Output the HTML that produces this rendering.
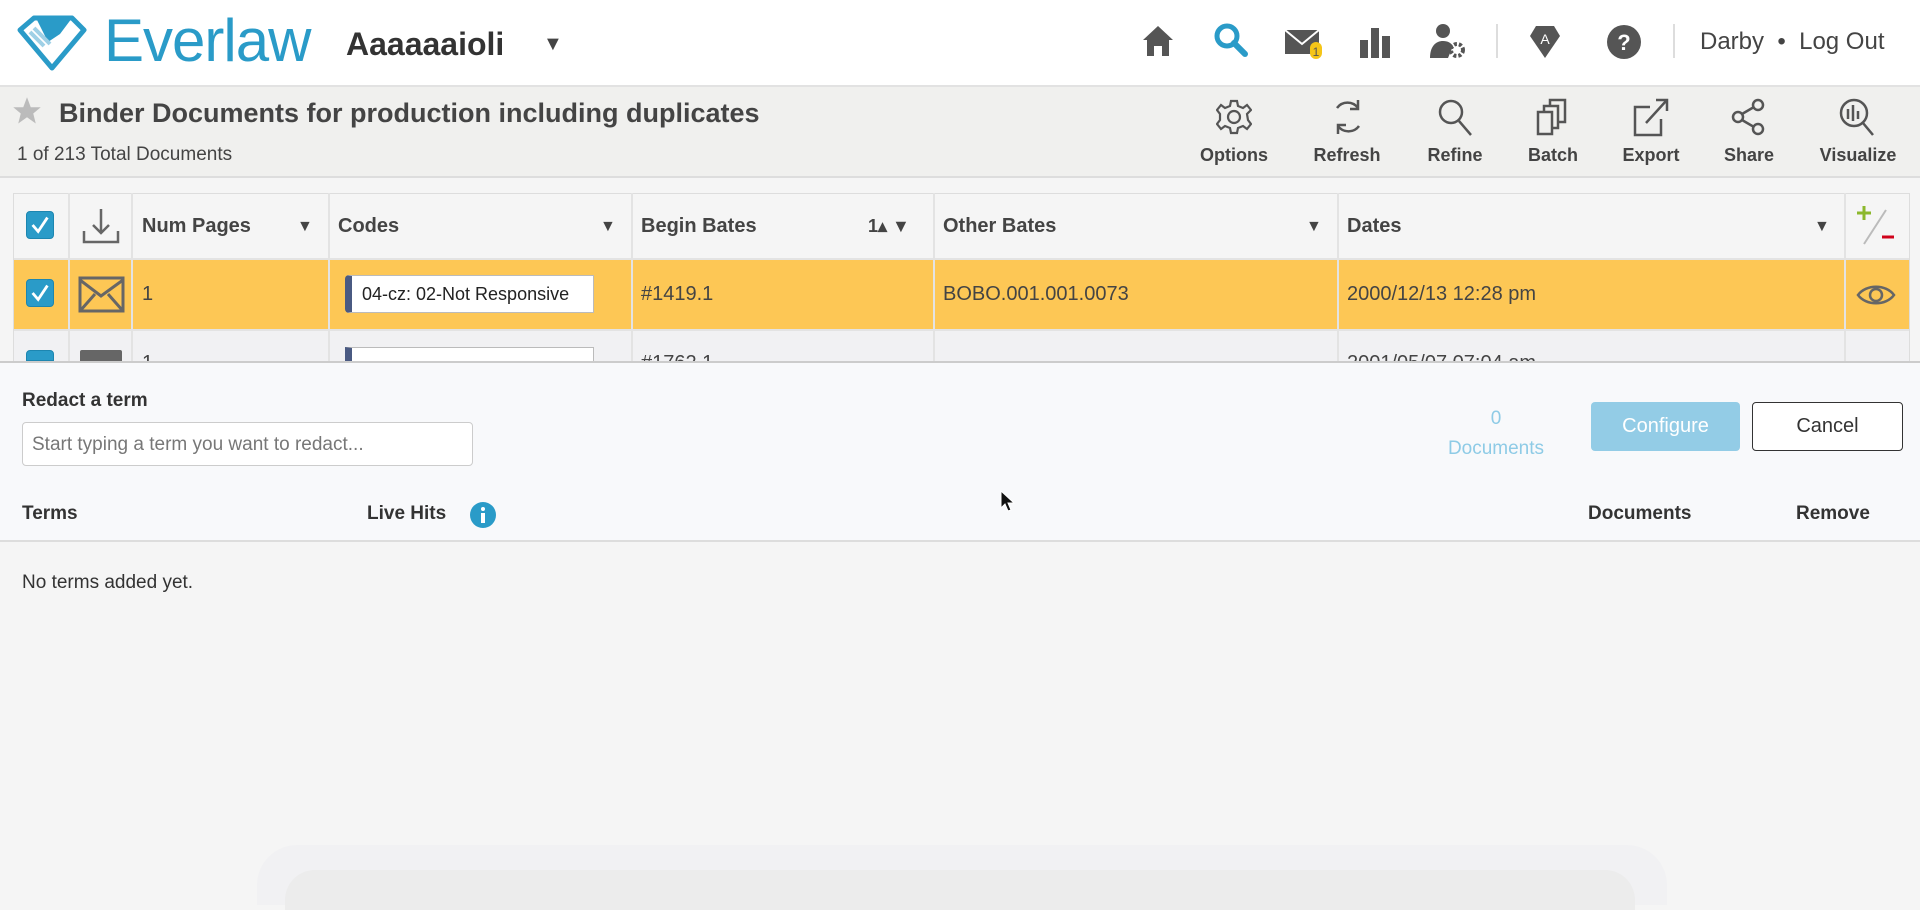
<!DOCTYPE html>
<html><head><meta charset="utf-8"><style>
*{box-sizing:border-box;margin:0;padding:0}
body{width:1920px;height:894px;overflow:hidden;position:relative;background:#f5f5f5;font-family:"Liberation Sans",sans-serif;color:#444}
.a{position:absolute;white-space:nowrap}
.hdr{left:0;top:0;width:1920px;height:87px;background:#fff;border-bottom:2px solid #e2e2e2}
.tb{left:0;top:87px;width:1920px;height:91px;background:#f0f0ee;border-bottom:2px solid #ddd}
.ti{text-align:center;font-size:18px;color:#444;font-weight:bold}
.tbl{left:13px;top:193px;width:1897px;height:168px;border:1px solid #ddd;background:#f5f5f5}
.cb{width:28px;height:28px;border-radius:4px;background:#2a9bc8;border:1px solid #1d86b0}
.th{font-size:20px;font-weight:bold;color:#444;top:215px}
.td{font-size:20px;color:#444;top:283px}
.td2{font-size:20px;color:#444;top:352px}
.vl{top:193px;width:2px;height:168px;background:#e3e3e3}
</style></head><body>
<div class="a hdr"></div>
<svg class="a" style="left:16px;top:14px" width="72" height="58" viewBox="0 0 72 58"><path d="M4 16 L18 4 L56 4 L68 16 L36 54 Z" fill="none" stroke="#2a9bc8" stroke-width="5" stroke-linejoin="round"/><path d="M20 4 L56 4 L44 20 L32 28 Z" fill="#2a9bc8"/><path d="M14 18 L28 32 M18 14 L34 30" stroke="#9fd0e6" stroke-width="4"/></svg>
<div class="a" style="left:104px;top:6px;font-size:60px;color:#2a9bc8;font-weight:300;letter-spacing:-1px">Everlaw</div>
<div class="a" style="left:346px;top:26px;font-size:32px;font-weight:bold;color:#333">Aaaaaaioli</div>
<div class="a" style="left:543px;top:33px;font-size:20px;color:#444">▼</div>
<svg class="a" style="left:1141px;top:24px" width="34" height="34" viewBox="0 0 34 34"><path d="M17 2 L32 16 L28 16 L28 32 L21 32 L21 22 L13 22 L13 32 L6 32 L6 16 L2 16 Z" fill="#555"/></svg>
<svg class="a" style="left:1213px;top:22px" width="36" height="36" viewBox="0 0 36 36"><circle cx="14" cy="14" r="10" fill="none" stroke="#2a9bc8" stroke-width="5"/><path d="M21 21 L32 32" stroke="#2a9bc8" stroke-width="6" stroke-linecap="round"/></svg>
<svg class="a" style="left:1284px;top:26px" width="40" height="34" viewBox="0 0 40 34"><rect x="1" y="4" width="34" height="24" fill="#555"/><path d="M1 4 L18 18 L35 4" fill="none" stroke="#fff" stroke-width="2"/><rect x="26" y="16" width="12" height="17" rx="6" fill="#f5c518"/><text x="32" y="30" font-size="12" text-anchor="middle" fill="#555" font-family="Liberation Sans">1</text></svg>
<svg class="a" style="left:1358px;top:24px" width="34" height="34" viewBox="0 0 34 34"><rect x="2" y="16" width="8" height="18" fill="#555"/><rect x="13" y="4" width="8" height="30" fill="#555"/><rect x="24" y="12" width="8" height="22" fill="#555"/></svg>
<svg class="a" style="left:1428px;top:22px" width="40" height="38" viewBox="0 0 40 38"><circle cx="15" cy="9" r="7" fill="#555"/><path d="M2 36 C2 24 8 19 15 19 C20 19 23 21 25 24 L20 36 Z" fill="#555"/><circle cx="29" cy="28" r="6" fill="none" stroke="#555" stroke-width="4" stroke-dasharray="3 2"/></svg>
<div class="a" style="left:1496px;top:24px;width:2px;height:34px;background:#ddd"></div>
<svg class="a" style="left:1528px;top:24px" width="34" height="36" viewBox="0 0 34 36"><path d="M8 2 L26 2 L32 12 L17 34 L2 12 Z" fill="#555"/><text x="17" y="20" font-size="14" text-anchor="middle" fill="#fff" font-family="Liberation Sans">A</text></svg>
<svg class="a" style="left:1606px;top:24px" width="36" height="36" viewBox="0 0 36 36"><circle cx="18" cy="18" r="17" fill="#555"/><text x="18" y="26" font-size="22" font-weight="bold" text-anchor="middle" fill="#fff" font-family="Liberation Sans">?</text></svg>
<div class="a" style="left:1673px;top:24px;width:2px;height:34px;background:#ddd"></div>
<div class="a" style="left:1700px;top:28px;font-size:24px;color:#444">Darby &nbsp;•&nbsp; Log Out</div>

<div class="a tb"></div>
<svg class="a" style="left:12px;top:96px" width="30" height="30" viewBox="0 0 24 24"><path d="M12 1 L15 9 L23 9 L17 14 L19 22 L12 17 L5 22 L7 14 L1 9 L9 9 Z" fill="#bbb"/></svg>
<div class="a" style="left:59px;top:98px;font-size:27px;font-weight:bold;color:#444">Binder Documents for production including duplicates</div>
<div class="a" style="left:17px;top:144px;font-size:19px;color:#444">1 of 213 Total Documents</div>
<svg class="a" style="left:1216px;top:98px" width="36" height="38" viewBox="0 0 36 38" fill="none" stroke="#555" stroke-width="2.2"><circle cx="18" cy="19" r="6"/><path d="M15 3 L21 3 L22 8 L27 10 L31 7 L35 12 L31 16 L32 22 L35 26 L31 31 L27 28 L22 30 L21 35 L15 35 L14 30 L9 28 L5 31 L1 26 L4 22 L4 16 L1 12 L5 7 L9 10 L14 8 Z"/></svg>
<svg class="a" style="left:1330px;top:98px" width="36" height="38" viewBox="0 0 36 38" fill="none" stroke="#555" stroke-width="2.5"><path d="M28 10 A13 13 0 0 0 7 10 M8 28 A13 13 0 0 0 29 28"/><path d="M28 2 L28 11 L20 11 M8 36 L8 27 L16 27"/></svg>
<svg class="a" style="left:1436px;top:97px" width="38" height="40" viewBox="0 0 38 40" fill="none" stroke="#555" stroke-width="2.5"><circle cx="15" cy="15" r="11"/><path d="M23 24 L35 38"/></svg>
<svg class="a" style="left:1535px;top:98px" width="36" height="38" viewBox="0 0 36 38" fill="none" stroke="#555" stroke-width="2.5"><rect x="3" y="14" width="14" height="22"/><path d="M9 14 V8 H23 V30 H17 M15 8 V2 H30 V24 H23"/></svg>
<svg class="a" style="left:1632px;top:97px" width="38" height="40" viewBox="0 0 38 40" fill="none" stroke="#555" stroke-width="2.5"><path d="M18 10 H3 V38 H29 V22"/><path d="M14 26 L34 4 M24 3 H35 V14"/></svg>
<svg class="a" style="left:1730px;top:98px" width="38" height="38" viewBox="0 0 38 38" fill="none" stroke="#555" stroke-width="2.5"><circle cx="28" cy="7" r="5"/><circle cx="8" cy="19" r="5"/><circle cx="28" cy="31" r="5"/><path d="M12 16 L24 9 M12 22 L24 29"/></svg>
<svg class="a" style="left:1838px;top:97px" width="38" height="40" viewBox="0 0 38 40" fill="none" stroke="#555" stroke-width="2.5"><circle cx="16" cy="16" r="13"/><path d="M25 26 L35 38 M10 12 V22 M15 8 V24 M20 14 V22"/></svg>
<div class="a ti" style="left:1184px;top:145px;width:100px">Options</div>
<div class="a ti" style="left:1297px;top:145px;width:100px">Refresh</div>
<div class="a ti" style="left:1405px;top:145px;width:100px">Refine</div>
<div class="a ti" style="left:1503px;top:145px;width:100px">Batch</div>
<div class="a ti" style="left:1601px;top:145px;width:100px">Export</div>
<div class="a ti" style="left:1699px;top:145px;width:100px">Share</div>
<div class="a ti" style="left:1808px;top:145px;width:100px">Visualize</div>

<div class="a tbl"></div>
<div class="a" style="left:14px;top:258px;width:1895px;height:73px;background:#fdc755;border-top:2px solid #e3e3e3;border-bottom:2px solid #e3e3e3"></div>
<div class="a" style="left:14px;top:331px;width:1895px;height:30px;background:#f1f1f3"></div>
<div class="a td2" style="left:142px">1</div>
<div class="a td2" style="left:641px">#1762.1</div>
<div class="a td2" style="left:1347px">2001/05/07 07:04 am</div>
<div class="a vl" style="left:68px"></div><div class="a vl" style="left:131px"></div><div class="a vl" style="left:328px"></div><div class="a vl" style="left:631px"></div><div class="a vl" style="left:933px"></div><div class="a vl" style="left:1337px"></div><div class="a vl" style="left:1844px"></div>
<svg class="a cb" style="left:26px;top:211px" viewBox="0 0 28 28"><path d="M6 14 L12 21 L22 6" fill="none" stroke="#fff" stroke-width="3"/></svg>
<svg class="a cb" style="left:26px;top:279px" viewBox="0 0 28 28"><path d="M6 14 L12 21 L22 6" fill="none" stroke="#fff" stroke-width="3"/></svg>
<svg class="a cb" style="left:26px;top:350px;height:11px;border-radius:4px 4px 0 0" viewBox="0 0 28 11"></svg>
<svg class="a" style="left:82px;top:207px" width="38" height="38" viewBox="0 0 38 38" fill="none" stroke="#666" stroke-width="2.5"><path d="M19 2 V26 M11 18 L19 26 L27 18 M2 24 V35 H36 V24"/></svg>
<svg class="a" style="left:78px;top:276px" width="47" height="38" viewBox="0 0 47 38" fill="none" stroke="#666" stroke-width="3"><rect x="2" y="2" width="43" height="33"/><path d="M2 4 L23 20 L45 4 M2 35 L17 18 M45 35 L30 18"/></svg>
<div class="a" style="left:80px;top:350px;width:42px;height:11px;background:#666;border-radius:2px 2px 0 0"></div>
<div class="a th" style="left:142px">Num Pages</div><div class="a th" style="left:297px;font-size:16px;top:218px">▼</div>
<div class="a th" style="left:338px">Codes</div><div class="a th" style="left:600px;font-size:16px;top:218px">▼</div>
<div class="a th" style="left:641px">Begin Bates</div><div class="a th" style="left:868px;font-size:18px;top:216px">1▴ ▼</div>
<div class="a th" style="left:943px">Other Bates</div><div class="a th" style="left:1306px;font-size:16px;top:218px">▼</div>
<div class="a th" style="left:1347px">Dates</div><div class="a th" style="left:1814px;font-size:16px;top:218px">▼</div>
<svg class="a" style="left:1856px;top:204px" width="40" height="42" viewBox="0 0 40 42"><path d="M8 2 V16 M1 9 H15" stroke="#8cb82c" stroke-width="3"/><path d="M30 6 L8 40" stroke="#bbb" stroke-width="2"/><path d="M26 33 H38" stroke="#d0021b" stroke-width="3"/></svg>
<div class="a td" style="left:142px">1</div>
<div class="a" style="left:345px;top:275px;width:249px;height:38px;background:#fff;border:1px solid #bbb;border-left:7px solid #4a5a82;border-radius:4px 0 0 4px;font-size:18px;color:#222;padding:8px 0 0 10px">04-cz: 02-Not Responsive</div>
<div class="a" style="left:345px;top:347px;width:249px;height:14px;background:#fff;border:1px solid #bbb;border-left:7px solid #4a5a82;border-bottom:none"></div>
<div class="a td" style="left:641px">#1419.1</div>
<div class="a td" style="left:943px">BOBO.001.001.0073</div>
<div class="a td" style="left:1347px">2000/12/13 12:28 pm</div>
<svg class="a" style="left:1856px;top:282px" width="40" height="26" viewBox="0 0 40 26" fill="none" stroke="#666" stroke-width="2.5"><path d="M2 13 C10 2 30 2 38 13 C30 24 10 24 2 13 Z"/><circle cx="20" cy="13" r="6"/></svg>

<div class="a" style="left:0;top:361px;width:1920px;height:181px;background:#f8f9fb;border-top:2px solid #ccc;border-bottom:2px solid #ddd"></div>
<div class="a" style="left:22px;top:390px;font-size:19px;font-weight:bold;color:#333">Redact a term</div>
<div class="a" style="left:22px;top:422px;width:451px;height:44px;background:#fff;border:1px solid #ccc;border-radius:4px;font-size:19px;color:#777;padding:11px 0 0 9px">Start typing a term you want to redact...</div>
<div class="a" style="left:1436px;top:404px;width:120px;text-align:center;font-size:19px;color:#8ecbe6;line-height:30px">0<br>Documents</div>
<div class="a" style="left:1591px;top:402px;width:149px;height:49px;background:#93cce6;border-radius:4px;color:#fff;font-size:20px;text-align:center;line-height:49px">Configure</div>
<div class="a" style="left:1752px;top:402px;width:151px;height:49px;background:#fff;border:1.5px solid #333;border-radius:4px;color:#333;font-size:20px;text-align:center;line-height:46px">Cancel</div>
<div class="a" style="left:22px;top:503px;font-size:19px;font-weight:bold;color:#333">Terms</div>
<div class="a" style="left:367px;top:503px;font-size:19px;font-weight:bold;color:#333">Live Hits</div>
<svg class="a" style="left:470px;top:502px" width="26" height="26" viewBox="0 0 26 26"><circle cx="13" cy="13" r="13" fill="#2a9bc8"/><circle cx="13" cy="7" r="2" fill="#fff"/><rect x="11" y="11" width="4" height="10" fill="#fff"/></svg>
<div class="a" style="left:1588px;top:503px;font-size:19px;font-weight:bold;color:#333">Documents</div>
<div class="a" style="left:1796px;top:503px;font-size:19px;font-weight:bold;color:#333">Remove</div>
<div class="a" style="left:22px;top:572px;font-size:19px;color:#333">No terms added yet.</div>
<svg class="a" style="left:1000px;top:490px" width="16" height="24" viewBox="0 0 16 24"><path d="M1 1 L1 18 L5 14 L8 21 L11 20 L8 13 L14 13 Z" fill="#111" stroke="#fff" stroke-width="1"/></svg>
<div class="a" style="left:257px;top:845px;width:1410px;height:60px;background:#f1f1f3;border-radius:40px 40px 0 0"></div>
<div class="a" style="left:285px;top:870px;width:1350px;height:40px;background:#ececec;border-radius:30px 30px 0 0"></div>
</body></html>
